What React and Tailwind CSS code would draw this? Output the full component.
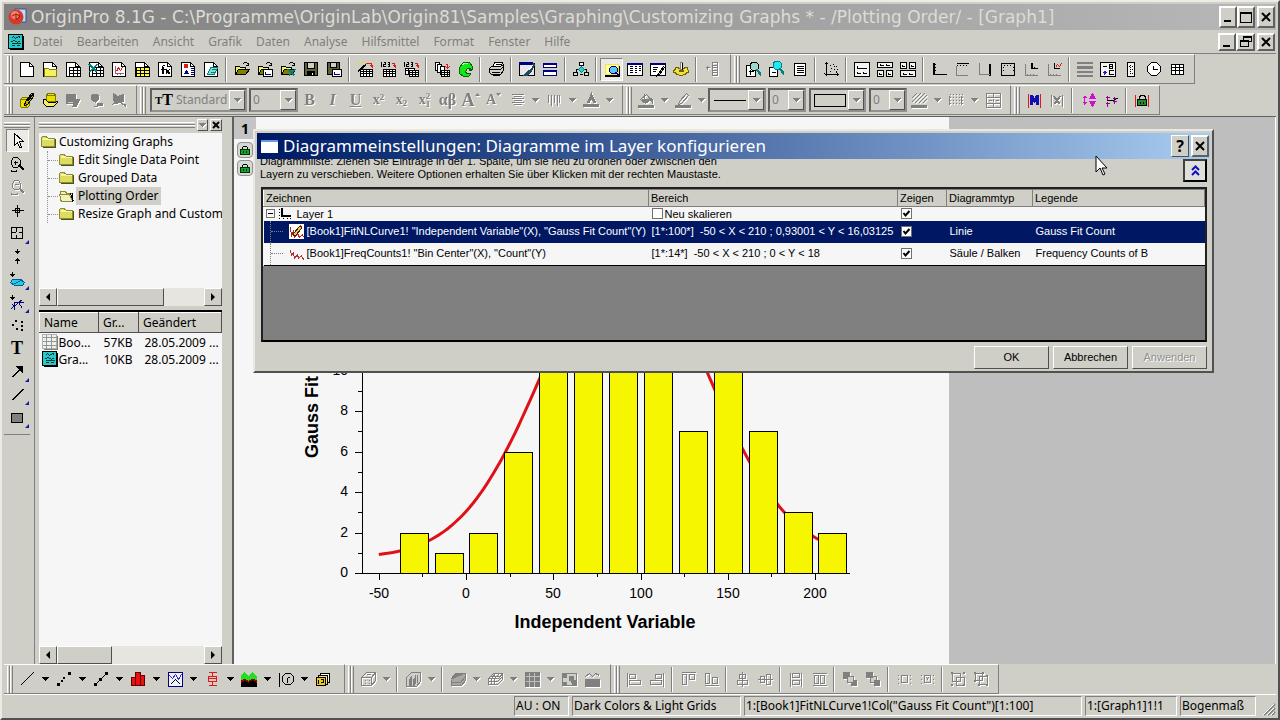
import { useState } from 'react'

const K = '#000'
const G = '#808080'
const W = '#fff'
const Y = '#f4f060'
const O = '#808000'
const N = '#000080'
const R = '#e01818'
const T = '#008080'
const C = '#20d0e0'
const M = '#d010d0'

const raised = 'border border-t-white border-l-white border-r-[#505050] border-b-[#505050] bg-[#d0cfc7]'
const sunken = 'border border-t-[#808080] border-l-[#808080] border-r-white border-b-white'

const page = [['M1 1h9l4 4v10h-13z', K, W], ['M10 1v4h4', K]]
const sheet = [['M4 6h11v9h-11zM4 9h11M4 12h11M8 6v9M12 6v9', K, W]]
const openFolder = [['M1 13v-8h4l1 1h5v2', K, Y], ['M1 13l3-5h11l-4 5z', K, O], ['M8 3l2-2h2l2 2M14 1v3h-3', K]]
const lens = [['M5 1h5l2 2v4l-2 2h-4l-2-2v-4z', K, '#a0d8c8'], ['M10 8l5 6M11 8l4 5M10 9l5 6', T]]
const oneTwoThree = ['M0 1h1v4M3 1h2v2h-2v2h2M7 1h2v4h-2M7 3h2', K]
const redArrow = ['M11 2h3v3M12 4h4M13 5h2M14 6h1', R]
const gridLow = ['M3 8h12v7h-12zM3 10h12M3 12h12M6 8v7M9 8v7M12 8v7', K, W]

// every layer is [path, stroke, fill], drawn on the centres of a 16px grid
const icons = {
  newProject: page,
  newFolder: [...page, ['M2 7h4l1 1h7v7h-12z', O, Y]],
  newBook: [...page, ...sheet],
  newExcel: [...page, ...sheet, ['M0 3l8 8M1 3l8 8M2 3l7 7M9 3l-8 8M8 3l-8 8', T]],
  newGraph: [...page, ['M4 4v8h8M3 6h1M3 9h1M6 13v-1M9 13v-1', '#a06070'], ['M5 10l2-4l2 3l2-3', R]],
  newMatrix: [...page, ['M2 6h13v9h-13zM2 9h13M2 12h13M6 6v9M10 6v9', K, '#ffff40']],
  newFunction: [...page, ['M7 4h-1l-1 1v7l-1 1M3 8h4M8 8l4 5M12 8l-4 5M6 5v7M9 8l4 5', K]],
  newLayout: [...page, ['M4 3h3v3h-3z', R, R], ['M4 12l2-3l2 3z', N, N], ['M10 7h3M10 9h3M10 11h3M10 13h3', N]],
  newNotes: [...page, ['M4 13l3-7h7l-3 7z', T, '#7fe0d0'], ['M8 8h4M7 11h4', T]],
  open: openFolder,
  openTemplate: [...openFolder, ['M6 8h9v7h-9z', K, W], ['M8 10v3h5', N]],
  openExcel: [...openFolder, ['M8 8l6 6M9 8l6 6M7 8l7 7M14 8l-6 6M15 8l-7 7', T]],
  save: [['M1 1h13v13h-13z', K, '#606038'], ['M4 1h7v6h-7z', K, '#d0cfc7'], ['M4 10h7v4h-7z', K, K], ['M9 11v2', W]],
  saveTemplate: [['M1 1h12v12h-12z', K, '#606038'], ['M4 1h6v5h-6z', K, '#d0cfc7'], ['M6 8h9v7h-9z', K, W], ['M8 10v3h5', N]],
  importWizard: [gridLow, redArrow, ['M1 9l8-7M1 10l8-7', K], ['M1 1l2 2M5 0v1M1 4h1M7 1h1', '#e0e000'], ['M8 2h3', R]],
  importAscii: [gridLow, redArrow, oneTwoThree],
  importMulti: [['M2 7h9v6h-9zM2 9h9M5 7v6', K, W], ['M6 9h9v6h-9zM6 11h9M6 13h9M9 9v6M12 9v6', K, W], redArrow, oneTwoThree],
  batch: [['M1 1h4v8h-4z', K, W], ['M3 3h4v8h-4z', K, W], ['M6 5h4v8h-4z', K, W], ['M7 9h8v6h-8zM7 11h8M7 13h8M10 9v6M13 9v6', K, W], ['M11 3h2v4M11 5l2 2l2-2', R]],
  recalc: [['M6 1h6l3 4v2l-1 2h-2l1-2h-3l-2 3l1 2h4v1l-2 2h-5l-4-3v-6z', '#086008', '#10e818'], ['M5 3l2-1h3', '#a0ffa0']],
  print: [['M4 6l2-5h8l-2 5', K, W], ['M1 7l2-2h9l3-2v6l-3 4h-9l-2-2z', K, '#d0cfc7'], ['M1 8h11l3-3M7 3h5M3 11h8M3 13h8v1h-7', K]],
  refresh: [['M0 2h15v12h-15z', K, '#e8e8e8'], ['M0 1h13v2h-13z', N, N], ['M14 2l-4 6l-3 3l-3 3h4l3-3l4-8z', '#204860', '#204860'], ['M13 4l-4 5', W]],
  duplicate: [['M1 2h13v4h-13z', N, W], ['M1 9h13v5h-13z', N, W], ['M1 3h13M1 10h13', N]],
  tree: [['M6 1h4v3h-4z', K, W], ['M8 4v2M8 10v1M3 11v-3h2M13 11v-3h-2', K], ['M8 5l3 3l-3 3l-3-3z', T, C], ['M0 11h4v3h-4z', K, '#c0f0c0'], ['M11 11h4v3h-4z', K, '#c0f0c0'], ['M6 13h3', K]],
  explorer: [['M1 3h13v10h-13z', '#f0e840', '#ffffa0'], ['M1 14h14v1h-14zM15 4v10', K], ['M7 5h4l2 2v3l-2 2h-4l-2-2v-3z', N, '#60c8e8'], ['M12 11l3 3M11 11l4 4', N]],
  results: [['M0 2h15v12h-15z', K, W], ['M0 2h15v1h-15z', N, N], ['M2 5h3M7 5h2M11 5h2M2 7h3M7 7h2M11 7h2M2 9h3M7 9h2M11 9h2M2 11h3M7 11h2', K]],
  script: [['M0 2h15v12h-15z', K, W], ['M0 2h15v1h-15z', N, N], ['M2 6h5M2 8h4M2 10h3', K], ['M13 5l-5 7l-1 2l2-1l5-7z', K, Y]],
  gear: [['M0 9l2-1v-2h3v1h6v-1h3v2l1 1v2h-2l-1 2h-2l-1 1h-3l-1-1h-2l-1-2h-2z', '#706000', '#f0e040'], ['M6 9h4v1h-4z', '#706000', '#d0cfc7'], ['M7 1h2v7h-2z', G, W], ['M9 1v7', K]],
  addColumn: [['M8 1h5v13h-5zM8 4h5M8 6h5M8 9h5M8 11h5', G], ['M1 6h4M3 4v4', G]],
  zoomIn: [['M0 4h9v11h-9z', K, W], ['M2 10h5M4 8v5', K], ...lens],
  zoomOut: [['M0 6h8v9h-8z', K, W], ['M2 11h4', K], ['M5 0h5l2 2v4l-2 2h-4l-2-2v-4z', T, '#20e8f8'], ['M10 7l5 6M11 7l4 5M10 8l5 6', T]],
  wholePage: [['M2 2h11v12h-11z', K, W], ['M4 5h7M4 7h7M4 9h7M4 11h7', K]],
  rescale: [['M3 1v12h12M1 3l2-2l2 2M13 11l2 2l-2 2M1 12l3 3', K], ['M6 4h1M9 3h1M12 5h1M7 7h1M10 8h1M13 8h1M6 10h1M12 10h1M10 5h1', K]],
  layer1: [['M0 1h15v14h-15z', K, '#f4f4f4'], ['M3 4v3h9M3 10v2h3M9 10v2h3', K]],
  layer4: [['M0 1h15v5h-15zM0 9h6v6h-6zM9 9h6v6h-6z', K, '#f4f4f4'], ['M3 2v2h3M9 2v2h3M2 11v2h2M11 11v2h2', K]],
  layer3: [['M0 1h6v6h-6zM9 1h6v6h-6zM0 9h15v6h-15z', K, '#f4f4f4'], ['M2 3v2h2M11 3v2h2M3 11v2h3M9 11v2h3', K]],
  axLB: [['M2 1v12h13M3 1v12M3 3h1M3 6h1M3 9h1M6 12v1M9 12v1M12 12v1', K]],
  axT: [['M2 2h12M3 3v1M6 3v1M9 3v1M12 3v1', K], ['M2 4v10h11', G]],
  axR: [['M12 2v12M13 2v12M11 3h1M11 6h1M11 9h1', K], ['M2 1v12h10', G]],
  axBox: [['M1 2h13v12h-13zM4 3v1M7 3v1M10 3v1M2 6h1M2 9h1M12 6h1M12 9h1', K]],
  axInset: [['M2 2v12h12M4 14v-2M7 14v-2M10 14v-2', G], ['M8 1v6h6M9 1v6M11 5v2', K]],
  axInset2: [['M2 2v12h12M4 14v-2M7 14v-2M10 14v-2', G], ['M8 1v6h5', K], ['M9 6l2-3l2 2l2-3', R]],
  bands: [['M0 1h15v1h-15zM0 5h15v2h-15zM0 10h15v1h-15zM0 14h15v1h-15z', G, G]],
  legend: [['M0 1h15v14h-15z', K, '#f4f4f4'], ['M2 5h4', K], ['M2 11h4M4 9v4M3 10h2M3 12h2', '#2020d0'], ['M9 3h3v4h-3zM9 5h3M13 9h-4v4h4', K]],
  colorScale: [['M4 1h7v14h-7z', K, '#f4f4f4'], ['M6 4h1M6 8h1M6 12h1M5 5h1M9 4v1M9 7v1M9 11v1M6 6h1M6 10h1', K]],
  clock: [['M5 1h5l4 4v5l-4 4h-5l-4-4v-5z', K, W], ['M7 4v4h4', K]],
  table: [['M2 3h12v10h-12zM2 6h12M2 9h12M6 3v10M10 3v10', K, W]],
  cube: [['M1 7l2-2h7v8l-2 2h-6l-1-1z', '#807800', '#e8e000'], ['M1 7h6v7', '#807800'], ['M6 9l6-8h2v3l-6 8l-3 1z', K, '#c8b800'], ['M7 9l6-7M8 9l5-6', K]],
  hand: [['M4 2l2-1h5l2 1v7h-9z', '#807800', '#e8e000'], ['M4 3h9', '#807800'], ['M1 7h2l3 3h6l3-1v1l-4 4h-7l-3-3z', K, '#f4f060']],
  mask1: [['M1 2h9v9h-9z', G, G], ['M8 7h6l-3 7h-4', G, G], ['M2 10h5', '#d0cfc7']],
  mask2: [['M4 2h5l1 2v3l-2 2h-3l-2-2v-3z', G, G], ['M6 10h1M8 11h6v2h-6M5 14h4', G, G]],
  mask3: [['M2 1l4 3l6-2v7l-8 2l-2-3z', G, G], ['M8 9l6 5M1 12l4-3M12 12h2v2', G]],
  paras: [['M2 2h12M4 4h8M2 6h12M4 8h8M2 10h12M4 12h8', G]],
  stripes: [['M2 2v8M5 2v11M8 2v8M11 2v11M13 2v8', G]],
  fontColor: [['M4 10l4-9l4 9h-2l-1-3h-2l-1 3z', G, G], ['M0 12h15v2h-15z', G, G]],
  bucket: [['M2 7l6-5l5 5l-6 4z', G], ['M6 1v5M10 5l4 2v4M4 7h8l-5 3z', G, G], ['M0 13h15v2h-15z', G, G]],
  pen: [['M4 9l7-8l2 2l-7 8l-3 1z', G], ['M0 13h15v2h-15z', G, G]],
  hatch: [['M0 6l5-5M0 10l9-9M3 11l10-10M7 11l8-8M11 11l4-4', G], ['M0 13h15v2h-15z', G, G]],
  dotGrid: [['M1 2h1M4 2h1M7 2h1M10 2h1M13 2h1M1 5h1M4 5h1M7 5h1M10 5h1M13 5h1M1 8h1M4 8h1M7 8h1M10 8h1M13 8h1M1 11h1M4 11h1M7 11h1M10 11h1M13 11h1M1 3v9M13 3v9', G]],
  cells: [['M1 1h14v14h-14zM1 5h14M1 11h14M8 1v4M8 11v4M3 8h3M10 8h3M7 7h1v2h-1', G]],
  mRange: [['M2 1v14M14 1v14', R], ['M4 3h2l2 4l2-4h2v9h-2v-5l-2 3l-2-3v5h-2z', '#1010b0', '#1010b0']],
  xRange: [['M2 2v12M13 2v12', G], ['M4 4l6 8M5 4l6 8M11 4l-6 8M10 4l-6 8', G]],
  arrows: [['M4 3v9M2 5h4M3 4h2M2 10h4M3 11h2', M], ['M12 1l3 5h-6zM12 14l3-5h-6z', M, M]],
  arrowsLine: [['M4 3v4M2 5h4M4 9v5M2 11h4M11 4v7M9 6h4M9 9h4', '#900090'], ['M3 8h6l3-1l3-2', K]],
  lock: [['M1 2v12M14 2v12', R], ['M3 7h9v6h-9z', K, '#209020'], ['M5 6v-2l2-1h2l2 1v2M6 9v2M9 9v2', K]],
  pointer: [['M5 0v12l3-3l2 5h2l-2-6h4z', K, '#f4f4f4']],
  zoomTool: [['M4 1h4l3 3v4l-3 3h-4l-2-3v-4zM6 4v4M4 6h4', K], ['M9 9l5 5M10 9l5 5M10 8l5 5M2 13v2h5v-2', K]],
  zoomToolOff: [['M5 1h4l2 3v4l-2 2h-4l-2-2v-4zM5 5h4', G], ['M10 9l4 5M11 9l4 5M2 13v2h6v-2', G]],
  reader: [['M8 2v12M2 8h12M6 6h4v4h-4z', K]],
  dataReader: [['M2 2h11v11h-11zM7 2v4M7 9v4M2 7h4M9 7h4', K]],
  selectData: [['M8 0v5M6 3l2 2l2-2zM8 10v5M6 12l2-2l2 2z', K, K]],
  maskRange: [['M3 0v5M1 3l2 2l2-2z', K, K], ['M3 8h8l4 3l-2 3h-8l-4-3z', '#0858a0', C], ['M4 13l9-5', '#0858a0']],
  maskData: [['M3 0v5M1 3l2 2l2-2z', K, K], ['M2 14l11-9M5 15v-7h9M9 8l4 6M3 10l3 3', N]],
  drawData: [['M6 3h1v1h-1zM3 7h1v1h-1zM7 11h1v1h-1zM12 4h1v1h-1zM12 8h1v1h-1zM12 12h1v1h-1z', K, K]],
  arrowTool: [['M2 14l9-9M3 14l9-9', K], ['M7 3h6v6z', K, K]],
  lineTool: [['M2 14l11-11M3 14l11-11', K]],
  rectTool: [['M2 4h11v9h-11z', K, G]],
  line: [['M1 14l13-13', K]],
  scatter: [['M1 12h2v2h-2zM5 9h1v1h-1zM7 6h1v1h-1zM12 1h2v2h-2z', K, K]],
  lineSymbol: [['M1 12h2v2h-2zM12 1h2v2h-2zM6 7h2v2h-2z', K, K], ['M2 13l11-11', K]],
  column: [['M1 6h4v8h-4zM5 1h5v13h-5zM10 4h4v10h-4z', '#600000', '#e81010']],
  template: [['M1 1h14v14h-14z', N, '#f0f0ff'], ['M2 4l3 3l3-4l3 5l3-5', '#3030d0'], ['M3 13l5-5l5 5', K]],
  box: [['M4 1h8M8 1v4M4 5h8v5h-8zM4 7h8M8 10v4M4 14h8', R]],
  area: [['M0 4l3-3l4 4l4-4l4 4v10h-15z', '#20e020', '#20e020'], ['M0 9l3-1l4 2l4-2l4 1v4h-15z', '#900000', '#900000'], ['M0 12l3-2l4 2l4-3l4 3v3h-15z', K, K]],
  polar: [['M1 1v14M0 3h1M0 6h1M0 9h1M0 12h1', K], ['M7 2h5l3 3v5l-3 3h-5l-3-3v-5zM9 6v5M9 6h2', K]],
  theme: [['M5 2h9v9h-9z', K, W], ['M3 4h9v9h-9z', K, Y], ['M1 6h9v8h-9z', K, '#f0c820'], ['M3 8v4M5 8h3v3h-3', K]],
  box3d: [['M1 6l5-5h9l-4 5zM1 6h10v8h-10zM11 14l4-5v-8M4 9h1M8 9h1M4 12h1M8 12h1M6 3h4', G]],
  bars3d: [['M1 6l5-5h9v9l-4 5h-10z', G, '#d0cfc7'], ['M4 14v-7M6 14v-10M8 14v-7M10 12v-9M12 11v-8', G], ['M5 14v-9M9 14v-8', G]],
  surface: [['M1 7l4-5h10l-4 5z', G, G], ['M1 8v6h10l4-5v-7M1 11h9l4-5', G, '#a8a8a0']],
  wire: [['M1 7l5-5h9l-4 5zM1 7v6h9l5-5v-6M1 10h9l5-5M4 7v6M7 7v6M3 5h9M8 2l-4 5M12 2l-5 5', G]],
  contour: [['M1 1h14v14h-14z', G, G], ['M5 1v14M10 1v14M1 5h14M1 10h14', '#c0c0b8']],
  image: [['M1 2h14v12h-14z', G, '#d0cfc7'], ['M1 2h4v4h-4zM8 5h4v4h-4zM1 11h4v3h-4zM10 9h4v5h-3z', G, G]],
  profile: [['M1 5l4-3l3 3l3-3l4 2', G], ['M1 8h14v7h-14z', G, G]],
  alignL: [['M1 1v14M3 3h6v4h-6zM3 9h11v4h-11z', G]],
  alignR: [['M14 1v14M6 3h6v4h-6zM1 9h11v4h-11z', G]],
  alignT: [['M1 1h14M2 3h4v10h-4zM9 3h5v5h-5z', G]],
  alignB: [['M1 14h14M2 2h4v10h-4zM9 6h5v6h-5z', G]],
  centerV: [['M8 0v15M5 3h6v4h-6zM3 9h10v4h-10z', G]],
  centerH: [['M0 8h15M3 5h4v6h-4zM9 3h4v10h-4z', G]],
  sameW: [['M2 1v14M13 1v14M4 2h7v4h-7zM4 9h7v4h-7z', G]],
  sameH: [['M1 2h14M1 14h14M3 4h4v8h-4zM9 4h4v8h-4z', G]],
  front: [['M1 1h6v6h-6zM9 9h5v5h-5z', G, G], ['M5 5h6v6h-6z', G, '#d0cfc7']],
  back: [['M5 5h6v6h-6z', G, '#d0cfc7'], ['M1 1h6v5h-6zM9 9h5v5h-5z', G, G]],
  frontData: [['M5 4h6v7h-6zM2 3v1M2 7v1M2 11v1M14 3v1M14 7v1M14 11v1', G]],
  backData: [['M5 4h6v7h-6zM7 6l2 3M9 6l-2 3M2 3v1M2 7v1M2 11v1M14 3v1M14 7v1M14 11v1', G]],
  group: [['M2 2h8v8h-8zM6 6h8v8h-8z', G], ['M1 1h1v1h-1zM13 1h1v1h-1zM1 13h1v1h-1zM13 13h1v1h-1z', G, G]],
  ungroup: [['M2 2h7v7h-7zM6 5h8v8h-8z', G], ['M1 1h1v1h-1zM9 1h1v1h-1zM1 9h1v1h-1zM13 13h1v1h-1zM5 13h1v1h-1zM13 4h1v1h-1z', G, G]],
  folder: [['M1 12v-9l1-1h4l1 2h7v8z', '#8c8c30', '#dcdc60'], ['M2 13h13v-9', '#50501c'], ['M2 4h5M2 5h11', '#f6f6a8']],
  folderOpen: [['M2 12v-9h5l1 2h6v8', '#8c8c30', '#f2f2c0'], ['M1 6h10l3 7h-11z', '#8c8c30', '#f2f2c0'], ['M12 5l3 8M14 4v9', K]],
  graphWin: [['M0 0h14v14h-14z', K, '#28c8c8'], ['M15 1v14h-14', K], ['M3 4l2-2l2 2l3-2l2 1M3 7l3-1l3 2l3-2M3 9h9M3 11h3M8 11h3', '#003838']],
  bookWin: [['M0 0h14v14h-14z', '#b0b0b0', '#f0f0f0'], ['M0 3h14M0 7h14M0 11h14M4 0v14M9 0v14', '#8a9a90'], ['M15 1v14h-14', G]],
  axes: [['M2 2v1M2 5v1M2 8v1M2 11v1M5 12h1M9 12h1M12 12h1', K], ['M4 1v9M5 1v9M4 10h9M4 9h9', K]],
  curve: [['M1 4l1 5l2-3l1 6l3-4l1 4l3-3l1 3l2 1', '#b83030']],
  curveEdit: [['M0 0h14v14h-14z', W, W], ['M1 3l1 8l2-4l1 6l3-4l2 4l3-3l1 3', '#b02020'], ['M4 9l6-7h2v2l-6 7h-2z', '#402000', '#f0c060'], ['M11 1l2 2', R]],
}

function Icon({ name, off, className = '' }) {
  return (
    <svg
      width="16"
      height="16"
      viewBox="0 0 16 16"
      shapeRendering="crispEdges"
      aria-hidden="true"
      className={`shrink-0 ${off ? 'drop-shadow-[1px_1px_0_#ffffff]' : ''} ${className}`}
    >
      <g transform="translate(.5 .5)">
        {icons[name].map(([d, stroke, fill], i) => (
          <path key={i} d={d} stroke={stroke} fill={fill || 'none'} />
        ))}
      </g>
    </svg>
  )
}

function Arrow({ off }) {
  return (
    <svg width="7" height="4" viewBox="0 0 7 4" shapeRendering="crispEdges" aria-hidden="true" className={off ? 'drop-shadow-[1px_1px_0_#ffffff]' : ''}>
      <path d="M0 0h7L3.500 4z" fill={off ? G : K} />
    </svg>
  )
}

// "|" is a separator, a trailing "+" adds a drop-down arrow, a leading "-" disables
function Tools({ items }) {
  return items.split(' ').map((item, i) => {
    if (item === '|') {
      return <span key={i} className="mx-[3px] h-[25px] w-0.5 border-l border-l-[#808080] border-r border-r-white" />
    }
    const off = item.startsWith('-')
    const name = item.replace('-', '').replace('+', '')
    return (
      <div key={i} className="flex shrink-0 items-center">
        <button
          aria-label={name}
          className={`flex h-[23px] w-[23px] items-center justify-center ${name === 'explorer' ? `${sunken} bg-[#eceae6]` : ''}`}
        >
          <Icon name={name} off={off} />
        </button>
        {item.endsWith('+') && (
          <button aria-label={`${name} menu`} className="flex h-[23px] w-[14px] items-center justify-center">
            <Arrow off={off} />
          </button>
        )}
      </div>
    )
  })
}

function Bar({ children, className = 'pr-1.5' }) {
  return (
    <div className={`flex shrink-0 items-center border-t border-r border-b border-t-white border-r-[#808080] border-b-[#808080] ${className}`}>
      <span className="mr-0.5 ml-[3px] flex h-[27px] w-1.5 shrink-0">
        <span className="w-[3px] border-l border-r border-l-white border-r-[#808080]" />
        <span className="w-[3px] border-l border-r border-l-white border-r-[#808080]" />
      </span>
      {children}
    </div>
  )
}

function Combo({ label, text, icon, children, className }) {
  return (
    <div className={`relative flex h-6 shrink-0 items-center border-2 border-t-[#606060] border-l-[#606060] border-r-[#909090] border-b-[#909090] ${className}`}>
      {icon && (
        <span className="flex w-[22px] shrink-0 items-center pl-[3px] font-['Liberation_Serif',serif] leading-none font-bold text-black">
          <span className="text-[11px]">T</span>
          <span className="text-base leading-none">T</span>
        </span>
      )}
      <select aria-label={label} className="h-full w-full min-w-0 appearance-none pl-0.5 text-xs leading-none text-[#808080]">
        <option>{text}</option>
      </select>
      {children}
      <span className={`pointer-events-none absolute top-0 right-0 flex h-5 w-4 items-center justify-center ${raised}`}>
        <Arrow off />
      </span>
    </div>
  )
}

function TextTool({ label, className, children }) {
  return (
    <button
      aria-label={label}
      className={`flex h-[23px] w-[23px] shrink-0 items-center justify-center font-['Liberation_Serif',serif] text-[#808080] drop-shadow-[1px_1px_0_#ffffff] ${className}`}
    >
      {children}
    </button>
  )
}

function WinButton({ label, d, className }) {
  return (
    <button aria-label={label} className={`flex items-center justify-center border-2 border-t-white border-l-white border-r-[#606060] border-b-[#606060] bg-[#d0cfc7] ${className}`}>
      <svg width="12" height="12" viewBox="0 0 12 12" fill="none" stroke="#000" aria-hidden="true">
        {d}
      </svg>
    </button>
  )
}

const MIN = <path d="M2 10h7" strokeWidth="2" />
const MAX = <path d="M.5 1.500h11v10h-11zM0 2.500h12" strokeWidth="1" shapeRendering="crispEdges" />
const RESTORE = <path d="M3.500 4.500v-4h8v5h-3M3 1.500h9M.5 4.500h8v6h-8zM0 5.500h9" shapeRendering="crispEdges" />
const CLOSE = <path d="M2 2l8 8M10 2l-8 8" strokeWidth="2" />

function HScroll({ thumb }) {
  return (
    <div className="flex h-[18px] bg-[#e6e5e0]">
      <button aria-label="Nach links" className={`flex w-[18px] items-center justify-center ${raised}`}>
        <svg width="4" height="8" viewBox="0 0 4 8" aria-hidden="true"><path d="M4 0v8L0 4z" /></svg>
      </button>
      <span className={`${raised} ${thumb}`} />
      <span className="flex-1" />
      <button aria-label="Nach rechts" className={`flex w-[18px] items-center justify-center ${raised}`}>
        <svg width="4" height="8" viewBox="0 0 4 8" aria-hidden="true"><path d="M0 0v8L4 4z" /></svg>
      </button>
    </div>
  )
}

const menus = ['Datei', 'Bearbeiten', 'Ansicht', 'Grafik', 'Daten', 'Analyse', 'Hilfsmittel', 'Format', 'Fenster', 'Hilfe']
const sideTools = ['pointer', 'zoomTool', 'zoomToolOff', 'reader', 'dataReader', 'selectData', 'maskRange', 'maskData', 'drawData', 'text', 'arrowTool', 'lineTool', 'rectTool']
const cornerTools = ['dataReader', 'maskRange', 'maskData', 'arrowTool', 'lineTool', 'rectTool']
const folders = ['Edit Single Data Point', 'Grouped Data', 'Plotting Order', 'Resize Graph and Custom']
const files = [
  { icon: 'bookWin', name: 'Boo...', size: '57KB', date: '28.05.2009 ...' },
  { icon: 'graphWin', name: 'Gra...', size: '10KB', date: '28.05.2009 ...' },
]

function SideTools() {
  return (
    <div className="flex w-[31px] shrink-0 flex-col items-center border-r border-r-[#808080] pr-1">
      <span className="mt-[5px] h-[3px] w-[26px] border-t border-b border-t-white border-b-[#808080]" />
      <span className="mb-px h-[3px] w-[26px] border-t border-b border-t-white border-b-[#808080]" />
      {sideTools.map((name) => (
        <button
          key={name}
          aria-label={name}
          className={`relative flex h-[23px] w-[23px] items-center justify-center ${name === 'pointer' ? `${sunken} bg-[#eceae6]` : ''}`}
        >
          {name === 'text' ? (
            <span className="font-['Liberation_Serif',serif] text-lg leading-none font-bold">T</span>
          ) : (
            <Icon name={name} off={name === 'zoomToolOff'} />
          )}
          {cornerTools.includes(name) && (
            <svg width="4" height="4" viewBox="0 0 4 4" aria-hidden="true" className="absolute right-0 bottom-0">
              <path d="M4 0v4H0z" fill="#1818a0" />
            </svg>
          )}
        </button>
      ))}
      <span className="mt-1.5 h-px w-full bg-[#808080]" />
    </div>
  )
}

function Explorer() {
  return (
    <div className="flex w-[199px] shrink-0 flex-col border-r-2 border-r-[#606060] pr-2.5 pl-1">
      <div className="flex h-4 items-center gap-0.5">
        <div className="flex flex-1 flex-col">
          <span className="h-[3px] border-t border-b border-t-white border-b-[#808080]" />
          <span className="h-[3px] border-t border-b border-t-white border-b-[#808080]" />
        </div>
        <button aria-label="Menü" className={`flex h-3 w-[11px] items-center justify-center ${raised}`}>
          <Arrow off />
        </button>
        <button aria-label="Schließen" className={`flex h-3 w-3 items-center justify-center ${raised}`}>
          <svg width="8" height="8" viewBox="0 0 8 8" aria-hidden="true"><path d="M1 1l6 6M7 1l-6 6" stroke="#000" strokeWidth="2" /></svg>
        </button>
      </div>
      <div className="h-[155px] overflow-hidden bg-[#f6f6f6] text-xs leading-[18px] whitespace-nowrap">
        <button className="flex h-[18px] items-center gap-[3px] pl-px">
          <Icon name="folder" />
          Customizing Graphs
        </button>
        <ul className="ml-2 border-l border-dotted border-l-[#909090]">
          {folders.map((name) => (
            <li key={name} className="flex h-[18px] items-center">
              <span className="w-2.5 shrink-0 border-t border-dotted border-t-[#909090]" />
              <button className="flex items-center gap-0.5">
                <Icon name={name === 'Plotting Order' ? 'folderOpen' : 'folder'} />
                <span className={`px-0.5 ${name === 'Plotting Order' ? 'bg-[#d0cfc7]' : ''}`}>{name}</span>
              </button>
            </li>
          ))}
        </ul>
      </div>
      <HScroll thumb="w-[107px]" />
      <div className="mt-1 flex flex-1 flex-col justify-between border-t-2 border-t-black bg-[#f6f6f6]">
        <table className="w-full table-fixed text-left text-xs whitespace-nowrap">
          <colgroup>
            <col className="w-[59px]" />
            <col className="w-[40px]" />
            <col />
          </colgroup>
          <thead>
            <tr className="h-5 bg-[#d0cfc7]">
              <th className={`pl-1 font-normal ${raised}`}>Name</th>
              <th className={`pl-1 font-normal ${raised}`}>Gr...</th>
              <th className={`pl-1 font-normal ${raised}`}>Geändert</th>
            </tr>
          </thead>
          <tbody>
            <tr className="h-px" />
            {files.map((file) => (
              <tr key={file.name} className="h-[17px] leading-[17px]">
                <td className="pl-0.5">
                  <span className="flex items-center gap-px"><Icon name={file.icon} />{file.name}</span>
                </td>
                <td className="pr-1.5 text-right">{file.size}</td>
                <td className="pl-1.5">{file.date}</td>
              </tr>
            ))}
          </tbody>
        </table>
        <HScroll thumb="w-[55px]" />
      </div>
    </div>
  )
}

// origin of the plot inside the page and pixels per data unit
const X0 = 232
const Y0 = 456
const sx = (x) => X0 + x * 1.745
const sy = (y) => Y0 - y * 20.25
const counts = [2, 1, 2, 6, 12, 14, 18, 15, 7, 12, 7, 3, 2]
const gauss = (x) => 0.75 + 15.28 * Math.exp(-((x - 91) ** 2) / (2 * 46.7 ** 2))
const fit = Array.from({ length: 131 }, (_, i) => -50 + i * 2)
  .map((x, i) => `${i ? 'L' : 'M'}${sx(x).toFixed(1)} ${sy(gauss(x)).toFixed(1)}`)
  .join('')

function Graph() {
  return (
    <svg width="715" height="546" viewBox="0 0 715 546" className="block" role="img" aria-label="Gauss Fit Count">
      <path d={fit} fill="none" stroke="#e01018" strokeWidth="3" />
      <g shapeRendering="crispEdges" stroke="#000" fill="#f6f600">
        {counts.map((n, i) => (
          <rect key={i} x={Math.round(sx(-38 + i * 20))} y={Math.round(sy(n))} width="28" height={Y0 - Math.round(sy(n))} />
        ))}
        <path d={`M${X0 - 104} ${Y0 - 380}V${Y0}M${X0 - 111} ${Y0}H616`} />
        {[0, 2, 4, 6, 8, 10, 12].map((y) => <path key={y} d={`M121 ${Math.round(sy(y))}h7M124 ${Math.round(sy(y + 1))}h4`} />)}
        {[-50, 0, 50, 100, 150, 200].map((x) => <path key={x} d={`M${Math.round(sx(x))} ${Y0}v7`} />)}
        {[-25, 25, 75, 125, 175].map((x) => <path key={x} d={`M${Math.round(sx(x))} ${Y0}v4`} />)}
      </g>
      <g className="font-['Liberation_Sans',Arial,sans-serif] text-sm" fill="#000">
        {[0, 2, 4, 6, 8, 10].map((y) => <text key={y} x="114" y={Math.round(sy(y)) + 4} textAnchor="end">{y}</text>)}
        {[-50, 0, 50, 100, 150, 200].map((x) => <text key={x} x={Math.round(sx(x))} y="481" textAnchor="middle">{x}</text>)}
      </g>
      <g className="font-['Liberation_Sans',Arial,sans-serif] text-lg font-bold" fill="#000">
        <text x="371" y="511" textAnchor="middle">Independent Variable</text>
        <text transform="translate(84 341) rotate(-90)">Gauss Fit Count</text>
      </g>
    </svg>
  )
}

function LayerLock({ label }) {
  return (
    <button aria-label={label} className="flex h-4 w-4 items-center justify-center rounded-sm border border-[#909090] bg-[#d8d8d4]">
      <svg width="10" height="11" viewBox="0 0 10 11" shapeRendering="crispEdges" aria-hidden="true">
        <path d="M2.500 4.500v-2l1-1h3l1 1v2" fill="none" stroke="#000" />
        <path d="M.5 4.500h9v5h-9z" fill="#18a030" stroke="#003000" />
        <path d="M3.500 6v2M6.500 6v2" stroke="#003000" />
      </svg>
    </button>
  )
}

function Check({ label, text, checked }) {
  const [on, setOn] = useState(checked)
  return (
    <label className="relative flex items-center gap-0.5">
      <input
        type="checkbox"
        aria-label={label}
        checked={on}
        onChange={() => setOn(!on)}
        className="h-[11px] w-[11px] appearance-none border border-[#707070] bg-white"
      />
      {on && (
        <svg width="11" height="11" viewBox="0 0 11 11" aria-hidden="true" className="pointer-events-none absolute left-0">
          <path d="M2.500 5l2 2.500L8.500 3" fill="none" stroke="#000" strokeWidth="2" />
        </svg>
      )}
      {text}
    </label>
  )
}

const columns = ['Zeichnen', 'Bereich', 'Zeigen', 'Diagrammtyp', 'Legende']
const plots = [
  { icon: 'curveEdit', name: '[Book1]FitNLCurve1! "Independent Variable"(X), "Gauss Fit Count"(Y)', range: '[1*:100*]  -50 < X < 210 ; 0,93001 < Y < 16,03125', type: 'Linie', legend: 'Gauss Fit Count' },
  { icon: 'curve', name: '[Book1]FreqCounts1! "Bin Center"(X), "Count"(Y)', range: '[1*:14*]  -50 < X < 210 ; 0 < Y < 18', type: 'Säule / Balken', legend: 'Frequency Counts of B' },
]

function PlotDialog() {
  const [selected, setSelected] = useState(0)

  return (
    <div
      role="dialog"
      aria-label="Diagrammeinstellungen"
      className="absolute top-[127px] right-[64px] left-[251px] border-2 border-t-[#e8e8e4] border-l-[#e8e8e4] border-r-[#505050] border-b-[#505050] bg-[#d0cfc7] p-0.5 font-['Liberation_Sans',Arial,sans-serif] text-[11px]"
    >
      <div className="flex h-[26px] items-center gap-[5px] bg-linear-to-r from-[#001864] via-[#5070a8] to-[#a8ccf0] pr-px pl-1 font-['Noto_Sans',sans-serif] text-white">
        <svg width="17" height="13" viewBox="0 0 17 13" aria-hidden="true">
          <path d="M0 0h17v13H0z" fill="#fff" />
          <path d="M0 0h17v2H0z" fill="#6898e8" />
        </svg>
        <h1 className="flex-1 text-[17px] leading-6 whitespace-nowrap">Diagrammeinstellungen: Diagramme im Layer konfigurieren</h1>
        <div className="flex gap-0.5">
          <button aria-label="Hilfe" className={`h-[22px] w-[18px] text-base leading-none font-bold text-black ${raised}`}>?</button>
          <WinButton label="Schließen" d={CLOSE} className="h-[22px] w-[18px]" />
        </div>
      </div>
      <div className="flex h-7 items-start justify-between pr-[3px] pl-[3px]">
        <p className="flex h-[22px] flex-col justify-end overflow-hidden leading-[13px]">
          <span className="block">Diagrammliste: Ziehen Sie Einträge in der 1. Spalte, um sie neu zu ordnen oder zwischen den</span>
          <span className="block">Layern zu verschieben. Weitere Optionen erhalten Sie über Klicken mit der rechten Maustaste.</span>
        </p>
        <button aria-label="Einklappen" className="flex h-[23px] w-6 items-center justify-center border-2 border-t-[#404040] border-l-[#404040] border-r-black border-b-black bg-[#e0e0da]">
          <svg width="9" height="11" viewBox="0 0 9 11" fill="none" stroke="#1010c0" strokeWidth="2" aria-hidden="true">
            <path d="M1 5l3.500-3.500L8 5M1 10l3.500-3.500L8 10" />
          </svg>
        </button>
      </div>
      <div className="mr-[3px] ml-1 h-[155px] border-2 border-[#202020] border-b-black bg-[#808080] pt-px">
        <table className="w-full table-fixed border-b border-b-black bg-[#f6f6f6] text-left whitespace-pre">
          <colgroup>
            <col />
            <col className="w-[249px]" />
            <col className="w-[49px]" />
            <col className="w-[86px]" />
            <col className="w-[172px]" />
          </colgroup>
          <thead>
            <tr className="h-4 bg-[#d0cfc7] leading-[14px]">
              {columns.map((name) => (
                <th key={name} className="border-r border-b border-l border-r-[#808080] border-b-[#808080] border-l-white p-0 pl-0.5 font-normal">{name}</th>
              ))}
            </tr>
          </thead>
          <tbody>
            <tr className="h-[14px] leading-[14px]">
              <td className="pl-0.5">
                <span className="flex h-[14px] items-center overflow-hidden">
                  <button aria-label="Layer zuklappen" className="mr-0.5 flex h-[9px] w-[9px] items-center justify-center border border-[#707070]">
                    <span className="h-px w-[5px] bg-black" />
                  </button>
                  <Icon name="axes" className="mr-1" />
                  Layer 1
                </span>
              </td>
              <td className="pl-[3px]"><Check text="Neu skalieren" checked={false} /></td>
              <td className="pl-[3px]"><Check label="Layer 1 zeigen" checked /></td>
              <td />
              <td />
            </tr>
            {plots.map((plot, i) => (
              <tr key={plot.name} onClick={() => setSelected(i)} className={`h-[22px] ${selected === i ? 'bg-[#001864] text-white' : ''}`}>
                <td className="p-0 pl-1.5">
                  <span className="flex h-[22px] items-center border-l border-dotted border-l-[#808080]">
                    <span className="mr-1.5 w-3 shrink-0 border-t border-dotted border-t-[#808080]" />
                    <Icon name={plot.icon} />
                    <span className="pl-0.5">{plot.name}</span>
                  </span>
                </td>
                <td className="pl-[3px]">{plot.range}</td>
                <td className="pl-[3px]"><Check label={`${plot.legend} zeigen`} checked /></td>
                <td className="pl-[3px]">{plot.type}</td>
                <td className="pl-[3px]">{plot.legend}</td>
              </tr>
            ))}
          </tbody>
        </table>
      </div>
      <div className="flex justify-end gap-1 pt-1 pr-[3px]">
        <button className={`h-[23px] w-[75px] ${raised}`}>OK</button>
        <button className={`h-[23px] w-[75px] ${raised}`}>Abbrechen</button>
        <button disabled className={`h-[23px] w-[75px] text-[#909090] text-shadow-[1px_1px_0_#ffffff] ${raised}`}>Anwenden</button>
      </div>
    </div>
  )
}

export default function App() {
  return (
    <div className="relative flex min-h-screen flex-col border-2 border-t-[#ecebe6] border-l-[#ecebe6] border-r-[#505050] border-b-[#505050] bg-[#d0cfc7] p-0.5 font-['Noto_Sans',sans-serif] text-xs text-black">
      <header className="flex h-[26px] items-center gap-1 bg-linear-to-r from-[#808080] to-[#b8b8b8] pr-px pl-1">
        <svg width="19" height="18" viewBox="0 0 19 18" aria-hidden="true">
          <path d="M7 1h11v13H7z" fill="#c8d8f0" stroke="#3050a0" />
          <circle cx="8" cy="9" r="7.500" fill="#d83828" />
          <circle cx="7" cy="7" r="4" fill="#f08070" />
          <path d="M4 8l4-2l4 2l-4 4M8 6v5" stroke="#901810" fill="none" />
        </svg>
        <h1 className="flex-1 font-['DejaVu_Sans',sans-serif] text-[17px] leading-6 whitespace-nowrap text-[#dddcd6]">
          OriginPro 8.1G - C:\Programme\OriginLab\Origin81\Samples\Graphing\Customizing Graphs * - /Plotting Order/ - [Graph1]
        </h1>
        <div className="flex">
          <WinButton label="Minimieren" d={MIN} className="h-[22px] w-[18px]" />
          <WinButton label="Maximieren" d={MAX} className="mr-0.5 h-[22px] w-[18px]" />
          <WinButton label="Schließen" d={CLOSE} className="h-[22px] w-[18px]" />
        </div>
      </header>
      <nav className="flex h-6 items-center border-b border-b-[#808080] pr-px pl-1 text-[#808080]">
        <Icon name="graphWin" className="mr-[9px]" />
        <div className="flex flex-1 gap-[14px]">
          {menus.map((name) => <button key={name}>{name}</button>)}
        </div>
        <WinButton label="Minimieren" d={MIN} className="h-[18px] w-[18px]" />
        <WinButton label="Wiederherstellen" d={RESTORE} className="mr-0.5 h-[18px] w-[19px]" />
        <WinButton label="Schließen" d={CLOSE} className="h-[18px] w-[18px]" />
      </nav>

      <div className="flex h-[31px] pb-px">
        <Bar className="pr-[7px]">
          <Tools items="newProject newFolder newBook newExcel newGraph newMatrix newFunction newLayout newNotes | open openTemplate openExcel save saveTemplate | importWizard importAscii importMulti | batch recalc | print | refresh duplicate | tree | explorer results script gear | -addColumn" />
        </Bar>
        <Bar>
          <Tools items="zoomIn zoomOut wholePage | rescale | layer1 layer4 layer3 | axLB axT axR axBox axInset axInset2 | bands legend colorScale clock table" />
        </Bar>
      </div>
      <div className="flex h-[31px] pb-px">
        <Bar>
          <Tools items="cube hand -mask1 -mask2 -mask3" />
        </Bar>
        <Bar>
          <Combo label="Schriftart" text="Standard" icon className="mr-0.5 ml-0.5 w-[97px]" />
          <Combo label="Schriftgröße" text="0" className="w-[49px]" />
          <TextTool label="Fett" className="text-base font-bold">B</TextTool>
          <TextTool label="Kursiv" className="text-base font-bold italic">I</TextTool>
          <TextTool label="Unterstrichen" className="text-base font-bold underline">U</TextTool>
          <TextTool label="Hochgestellt" className="text-sm font-bold"><span>x<sup className="text-[9px]">2</sup></span></TextTool>
          <TextTool label="Tiefgestellt" className="text-sm font-bold"><span>x<sub className="text-[9px]">2</sub></span></TextTool>
          <TextTool label="Hoch- und tiefgestellt" className="text-sm font-bold">
            x
            <span className="flex flex-col text-[9px] leading-[8px]"><span>2</span><span>1</span></span>
          </TextTool>
          <TextTool label="Griechisch" className="text-base font-bold">αβ</TextTool>
          <TextTool label="Schrift größer" className="text-lg font-bold">
            A
            <svg width="5" height="3" viewBox="0 0 5 3" aria-hidden="true" className="mt-1 self-start"><path d="M0 3h5L2.500 0z" fill={G} /></svg>
          </TextTool>
          <TextTool label="Schrift kleiner" className="text-sm font-bold">
            A
            <svg width="5" height="3" viewBox="0 0 5 3" aria-hidden="true" className="mt-1 self-start"><path d="M0 0h5L2.500 3z" fill={G} /></svg>
          </TextTool>
          <Tools items="-paras+ -stripes+ -fontColor+" />
        </Bar>
        <Bar>
          <Tools items="-bucket+ -pen+" />
          <Combo label="Linienart" text="" className="mr-0.5 w-[58px]">
            <span className="pointer-events-none absolute left-1 h-px w-8 bg-black" />
          </Combo>
          <Combo label="Linienbreite" text="0" className="mr-[3px] w-[38px]" />
          <Combo label="Muster" text="" className="mr-[3px] w-[57px]">
            <span className="pointer-events-none absolute left-[3px] h-[13px] w-8 border border-black" />
          </Combo>
          <Combo label="Musterbreite" text="0" className="w-[38px]" />
          <Tools items="-hatch+ -dotGrid+ -cells" />
        </Bar>
        <Bar>
          <Tools items="mRange -xRange | arrows arrowsLine | lock" />
        </Bar>
      </div>

      <main className="flex flex-1 border-t border-t-[#606060]">
        <SideTools />
        <Explorer />
        <div className="flex flex-1 border-r border-r-white bg-[#bebebe]">
          <div className="relative w-[715px] shrink-0 bg-[#f6f6f6]">
            <Graph />
            <div className="absolute top-0 left-0 flex w-[22px] flex-col items-center gap-0.5">
              <span className="mb-px h-[22px] w-full bg-[#c4c4c4] text-center text-sm leading-6 font-bold">1</span>
              <LayerLock label="Diagramm 1" />
              <LayerLock label="Diagramm 2" />
            </div>
          </div>
        </div>
      </main>

      <div className="flex h-[30px]">
        <Bar className="pr-2.5">
          <Tools items="line+ scatter+ lineSymbol+ column+ template+ box+ area+ polar+ theme" />
        </Bar>
        <Bar className="pr-[7px]">
          <Tools items="-box3d+ | -bars3d+ | -surface+ -wire+ -contour+ -image -profile" />
        </Bar>
        <Bar>
          <Tools items="-alignL -alignR | -alignT -alignB | -centerV -centerH | -sameW -sameH | -front -back | -frontData -backData | -group -ungroup" />
        </Bar>
      </div>
      <footer className="flex h-[22px] items-end justify-end gap-[3px] border-t border-t-white text-xs leading-[18px] whitespace-nowrap">
        <span className={`h-5 w-[55px] pl-px ${sunken}`}>AU : ON</span>
        <span className={`h-5 w-[169px] pl-px ${sunken}`}>Dark Colors &amp; Light Grids</span>
        <span className={`h-5 w-[338px] pl-px ${sunken}`}>1:[Book1]FitNLCurve1!Col("Gauss Fit Count")[1:100]</span>
        <span className={`h-5 w-[92px] pl-px ${sunken}`}>1:[Graph1]1!1</span>
        <span className={`h-5 w-[76px] pl-px ${sunken}`}>Bogenmaß</span>
        <svg width="17" height="14" viewBox="0 0 17 14" aria-hidden="true" className="self-end">
          <path d="M5 13L16 2M9 13l7-7M13 13l3-3" stroke="#808080" strokeWidth="2" />
          <path d="M4 13L15 2M8 13l7-7M12 13l3-3" stroke="#fff" />
        </svg>
      </footer>

      <PlotDialog />
      <svg width="13" height="21" viewBox="0 0 13 21" aria-hidden="true" className="pointer-events-none absolute top-[153px] left-[1093px]">
        <path d="M1 1v16l4-4l3 7l2-1l-3-6h5z" fill="#fff" stroke="#000" />
      </svg>
    </div>
  )
}
